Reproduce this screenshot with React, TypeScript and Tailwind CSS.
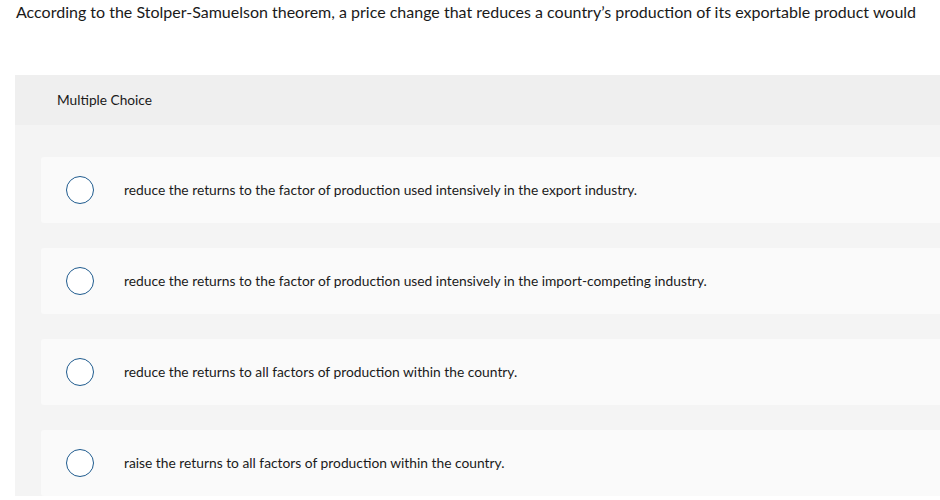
import React from "react";

const options = [
  "reduce the returns to the factor of production used intensively in the export industry.",
  "reduce the returns to the factor of production used intensively in the import-competing industry.",
  "reduce the returns to all factors of production within the country.",
  "raise the returns to all factors of production within the country.",
];

export default function App() {
  return (
    <div className="w-[940px] h-[500px] overflow-hidden bg-white text-[#1a1a1a]" style={{ fontFamily: "Lato, 'Open Sans', sans-serif" }}>
      <div className="pl-4 pt-[2px] h-[75px] text-[16px] leading-[20px] whitespace-nowrap">
        According to the Stolper-Samuelson theorem, a price change that reduces a country’s production of its exportable product would
      </div>
      <div className="ml-[15px] w-[960px] bg-[#f4f4f4]">
        <div className="h-[50px] bg-[#efefef] flex items-center pl-[42px] pt-[1px] text-[13.7px]">Multiple Choice</div>
        <div className="pt-[32px] pl-[26px] flex flex-col gap-[25px]">
          {options.map((o) => (
            <div key={o} className="h-[66px] bg-[#fafafa] rounded-[3px] flex items-center">
              <div className="ml-[25px] w-[28px] h-[28px] rounded-full border-[1.5px] border-[#1f5b8e] bg-white shrink-0" />
              <div className="ml-[30px] pt-[1px] text-[13.8px] whitespace-nowrap">{o}</div>
            </div>
          ))}
        </div>
      </div>
    </div>
  );
}
